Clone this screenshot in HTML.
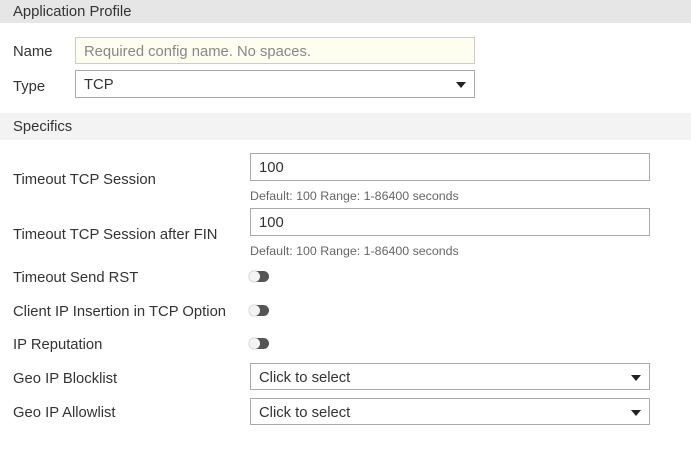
<!DOCTYPE html>
<html><head><style>
body{margin:0;width:691px;height:449px;background:#fff;font-family:"Liberation Sans",sans-serif;color:#333;position:relative;overflow:hidden}
.a{position:absolute}
.bar{left:0;width:691px;font-size:14.8px;line-height:1;padding-left:13px;box-sizing:border-box}
.lbl{left:13px;font-size:14.8px;margin-top:1px}
.in{box-sizing:border-box;border:1px solid #aaa;background:#fff;font-size:14.8px;padding-left:8px;padding-top:2px;display:flex;align-items:center}
.tri{position:absolute;right:8px;top:11px;width:0;height:0;border-left:5px solid transparent;border-right:5px solid transparent;border-top:6px solid #222}
.help{left:250px;font-size:12.4px;color:#666;margin-top:1px}
.tg{left:249px;width:20px;height:11px;border-radius:6px;background:#555}
.tg::after{content:"";position:absolute;left:0;top:0;width:11px;height:11px;border-radius:50%;background:#f4f4f4;box-shadow:0 0 1px #666}
</style></head><body>
<div class="a bar" style="top:0;height:23px;background:#e6e6e6;padding-top:5px">Application Profile</div>
<div class="a lbl" style="top:43px">Name</div>
<div class="a in" style="left:75px;top:37px;width:400px;height:27px;background:#fdfdf0;border-color:#ccc;color:#888">Required config name. No spaces.</div>
<div class="a lbl" style="top:78px">Type</div>
<div class="a in" style="left:75px;top:70px;width:400px;height:28px">TCP<span class="tri"></span></div>
<div class="a bar" style="top:113px;height:27px;background:#f3f3f3;padding-top:7px">Specifics</div>
<div class="a lbl" style="top:171px">Timeout TCP Session</div>
<div class="a in" style="left:250px;top:153px;width:400px;height:28px">100</div>
<div class="a help" style="top:188px">Default: 100 Range: 1-86400 seconds</div>
<div class="a lbl" style="top:226px">Timeout TCP Session after FIN</div>
<div class="a in" style="left:250px;top:208px;width:400px;height:28px">100</div>
<div class="a help" style="top:243px">Default: 100 Range: 1-86400 seconds</div>
<div class="a lbl" style="top:269px">Timeout Send RST</div>
<div class="a tg" style="top:271px"></div>
<div class="a lbl" style="top:303px">Client IP Insertion in TCP Option</div>
<div class="a tg" style="top:305px"></div>
<div class="a lbl" style="top:336px">IP Reputation</div>
<div class="a tg" style="top:338px"></div>
<div class="a lbl" style="top:370px">Geo IP Blocklist</div>
<div class="a in" style="left:250px;top:363px;width:400px;height:27px">Click to select<span class="tri"></span></div>
<div class="a lbl" style="top:404px">Geo IP Allowlist</div>
<div class="a in" style="left:250px;top:398px;width:400px;height:27px">Click to select<span class="tri"></span></div>
</body></html>
